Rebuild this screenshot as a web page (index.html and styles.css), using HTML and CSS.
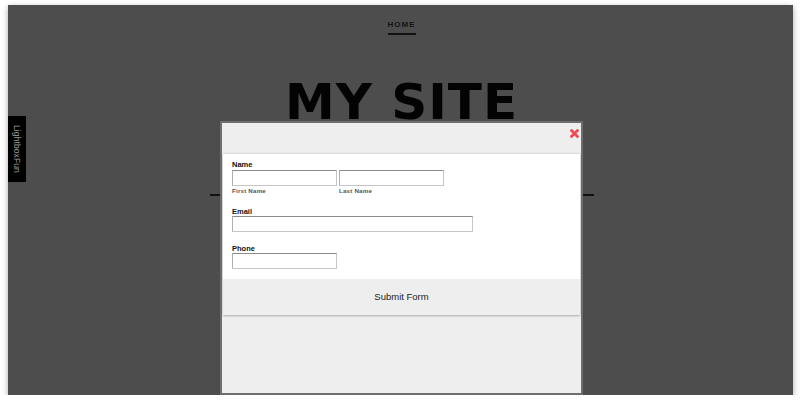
FILE: index.html
```html
<!DOCTYPE html>
<html lang="en">
<head>
<meta charset="utf-8">
<title>My Site</title>
<link rel="stylesheet" href="styles.css">
</head>
<body>
<div class="frame">
  <nav class="nav"><a class="nav-link" href="#">HOME</a></nav>
  <h1 class="site-title">MY SITE</h1>
  <div class="rule"></div>

  <div class="side-tab"><span>LightboxFun</span></div>

  <div class="modal">
    <div class="modal-head">
      <svg class="close" width="9" height="9" viewBox="0 0 9 9" aria-label="close">
        <path d="M1.6 1.6 L7.4 7.4 M7.4 1.6 L1.6 7.4" stroke="#f04c58" stroke-width="2.8" stroke-linecap="square" fill="none"/>
      </svg>
    </div>
    <div class="card">
      <form class="form">
        <label class="label">Name</label>
        <div class="name-row">
          <div class="sub-field">
            <input class="input input-short" type="text">
            <span class="sublabel">First Name</span>
          </div>
          <div class="sub-field">
            <input class="input input-short" type="text">
            <span class="sublabel">Last Name</span>
          </div>
        </div>
        <label class="label label-gap">Email</label>
        <input class="input input-long" type="text">
        <label class="label label-gap2">Phone</label>
        <input class="input input-short" type="text">
      </form>
      <div class="submit">Submit Form</div>
    </div>
  </div>
</div>
</body>
</html>
```
FILE: styles.css
```css
html, body {
  margin: 0;
  padding: 0;
  background: #ffffff;
}
body {
  padding: 5px 7px 0 8px;
  font-family: "Liberation Sans", Arial, sans-serif;
}
.frame {
  position: relative;
  height: 390px;
  background: #4d4d4d;
  box-shadow: 0 2px 6px rgba(0, 0, 0, 0.35);
  padding-top: 15px;
  box-sizing: border-box;
  overflow: hidden;
}
.nav {
  display: flex;
  justify-content: center;
  padding-left: 2px;
}
.nav-link {
  display: inline-block;
  font-size: 8px;
  line-height: 10px;
  font-weight: bold;
  letter-spacing: 1px;
  color: #141414;
  text-decoration: none;
  padding-bottom: 3px;
  border-bottom: 2px solid #111;
}
.site-title {
  margin: 42px 0 0 0;
  text-align: center;
  font-family: "DejaVu Sans", sans-serif;
  font-weight: bold;
  font-size: 50px;
  line-height: 50px;
  letter-spacing: 1px;
  color: #030303;
  padding-left: 2px;
}
.rule {
  width: 384px;
  height: 2px;
  margin: 67px auto 0;
  background: #111;
  position: relative;
  left: 1px;
}
.side-tab {
  position: absolute;
  left: 0;
  top: 111px;
  width: 18px;
  height: 66px;
  background: #000;
  display: flex;
  align-items: center;
  justify-content: center;
}
.side-tab span {
  writing-mode: vertical-rl;
  font-size: 8.5px;
  color: #9a9a9a;
  letter-spacing: 0.1px;
}
.modal {
  position: absolute;
  left: 212px;
  top: 116px;
  bottom: 0;
  width: 363px;
  box-sizing: border-box;
  border: 2px solid #6e6e6e;
  background: #eeeeee;
}
.modal-head {
  height: 30px;
  display: flex;
  justify-content: flex-end;
  align-items: flex-start;
  padding: 6px 2px 0 0;
  box-sizing: border-box;
}
.close {
  display: block;
}
.card {
  margin: 0 1px;
  box-shadow: 0 1px 2px rgba(0, 0, 0, 0.28);
  border-top: 1px solid #dcdcdc;
}
.form {
  background: #ffffff;
  padding: 7px 9px 10px;
  display: flex;
  flex-direction: column;
  align-items: flex-start;
}
.label {
  font-size: 7.5px;
  line-height: 8.5px;
  font-weight: bold;
  color: #111;
}
.label-gap {
  margin-top: 13px;
}
.label-gap2 {
  margin-top: 12.5px;
}
.name-row {
  display: flex;
  gap: 2px;
}
.sub-field {
  display: flex;
  flex-direction: column;
}
.sublabel {
  margin-top: 1px;
  font-size: 6.2px;
  line-height: 8px;
  font-weight: bold;
  letter-spacing: 0.2px;
  color: #555;
}
.input {
  display: block;
  margin: 0;
  height: 16px;
  box-sizing: border-box;
  border: 1px solid #c6c6c6;
  border-top-color: #8c8c8c;
  border-left-color: #b0b0b0;
  background: #fff;
  padding: 0 2px;
  font-size: 8px;
}
.input-short {
  width: 105px;
}
.input-long {
  width: 241px;
}
.submit {
  background: #eeeeee;
  height: 36px;
  line-height: 36px;
  text-align: center;
  font-size: 9.5px;
  color: #222;
}
```
